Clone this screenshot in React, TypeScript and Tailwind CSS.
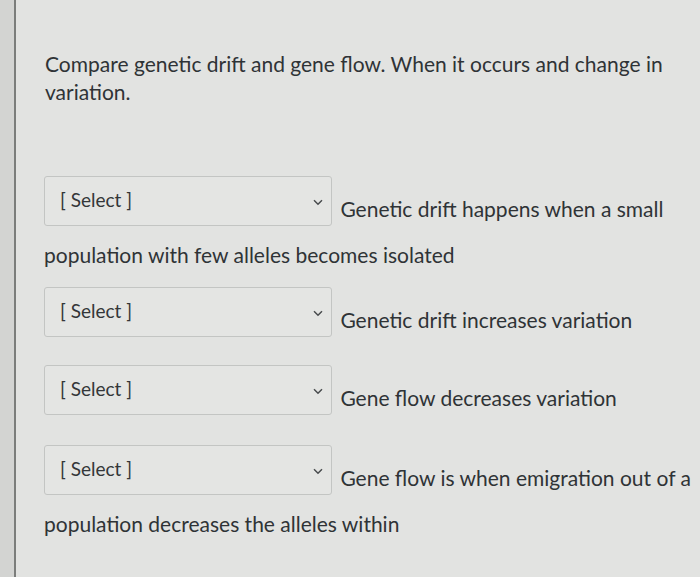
import React from 'react';

const Dropdown: React.FC = () => {
  return (
    <span className="inline-block overflow-hidden align-[-24px] w-[288px] h-[50px] mr-[3px] mb-[15px] rounded-[3px] border border-[#c3c5c3] bg-[#e4e5e3]">
      <span className="flex h-full items-center justify-between pl-[15px] pr-[8px] pb-[3px]">
        <span className="text-[19px] leading-none text-[#333638]">[ Select ]</span>
        <svg width="10" height="7" viewBox="0 0 10 7" fill="none" className="mt-[5px]">
          <path d="M1 1.2l4 4 4-4" stroke="#4a4d4f" strokeWidth="1.5" />
        </svg>
      </span>
    </span>
  );
};

const App: React.FC = () => {
  return (
    <div
      className="flex h-[580px] w-[700px] flex-col overflow-hidden bg-white"
      style={{ fontFamily: 'Lato, "Open Sans", sans-serif' }}
    >
      <div className="flex h-[577px]">
        {/* window edge */}
        <div className="w-[16px] shrink-0 border-r-2 border-[#7b7d7b] bg-[#d3d4d2]" />
        <main className="flex-1 bg-[#e2e3e1] pl-[28px] pr-[6px] pt-[50px] text-[21px] leading-[28px] text-[#2f3336]">
          <p className="pl-[1px]">Compare genetic drift and gene flow. When it occurs and change in variation.</p>

          <p className="mt-[70px]">
            <Dropdown /> Genetic drift happens when a small population with few alleles becomes isolated
          </p>

          <p className="mt-[18px]">
            <Dropdown /> Genetic drift increases variation
          </p>

          <p className="mt-[13px]">
            <Dropdown /> Gene flow decreases variation
          </p>

          <p className="mt-[15px]">
            <Dropdown /> Gene flow is when emigration out of a population decreases the alleles within
          </p>
        </main>
      </div>
    </div>
  );
};

export default App;
